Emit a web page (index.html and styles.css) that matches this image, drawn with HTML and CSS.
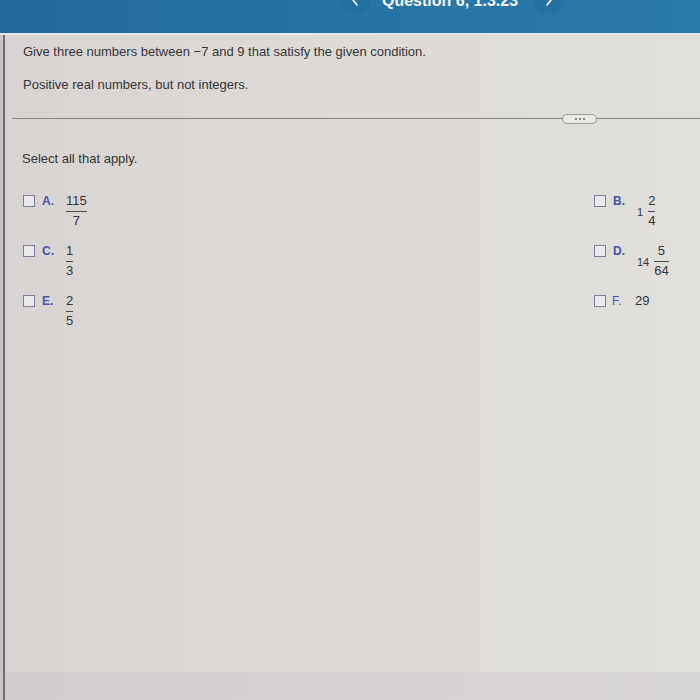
FILE: index.html
```html
<!DOCTYPE html>
<html lang="en">
<head>
<meta charset="utf-8">
<title>Question 6, 1.3.23</title>
<link rel="stylesheet" href="styles.css">
</head>
<body>
<div class="screen">
  <header class="topbar">
    <span class="navbtn">
      <svg width="10" height="12" viewBox="0 0 10 12"><path d="M7 1 L3 6 L7 11" fill="none" stroke="#ffffff" stroke-width="1.6" stroke-linecap="round" stroke-linejoin="round"/></svg>
    </span>
    <span class="title">Question 6, 1.3.23</span>
    <span class="navbtn navbtn-next">
      <svg width="10" height="12" viewBox="0 0 10 12"><path d="M3 1 L7 6 L3 11" fill="none" stroke="#ffffff" stroke-width="1.6" stroke-linecap="round" stroke-linejoin="round"/></svg>
    </span>
  </header>
  <div class="page">
    <main class="content">
      <p class="q">Give three numbers between &minus;7 and 9 that satisfy the given condition.</p>
      <p class="q q2">Positive real numbers, but not integers.</p>
      <div class="divider">
        <span class="rule rule-left"></span>
        <span class="pill"><i></i><i></i><i></i></span>
        <span class="rule rule-right"></span>
      </div>
      <p class="instr">Select all that apply.</p>
      <div class="options">
        <div class="opt">
          <span class="box"></span><span class="lbl">A.</span>
          <span class="frac"><span class="num">115</span><span class="den">7</span></span>
        </div>
        <div class="opt">
          <span class="box"></span><span class="lbl">B.</span>
          <span class="mixed"><span class="whole">1</span><span class="frac"><span class="num">2</span><span class="den">4</span></span></span>
        </div>
        <div class="opt">
          <span class="box"></span><span class="lbl">C.</span>
          <span class="frac"><span class="num">1</span><span class="den">3</span></span>
        </div>
        <div class="opt">
          <span class="box"></span><span class="lbl">D.</span>
          <span class="mixed mixed-d"><span class="whole">14</span><span class="frac"><span class="num">5</span><span class="den">64</span></span></span>
        </div>
        <div class="opt">
          <span class="box"></span><span class="lbl">E.</span>
          <span class="frac"><span class="num">2</span><span class="den">5</span></span>
        </div>
        <div class="opt">
          <span class="box"></span><span class="lbl lbl-f">F.</span>
          <span class="plain">29</span>
        </div>
      </div>
    </main>
    <footer class="footer"></footer>
  </div>
</div>
</body>
</html>
```

FILE: styles.css
```css
html, body {
  margin: 0;
  padding: 0;
}

body {
  width: 700px;
  height: 700px;
  overflow: hidden;
  font-family: "Liberation Sans", Arial, sans-serif;
  color: #3c3c3c;
}

.screen {
  height: 700px;
  display: flex;
  flex-direction: column;
  background: #cbc7c8;
}

.topbar {
  flex: 0 0 auto;
  height: 33px;
  border-bottom: 2px solid #e7e4e1;
  background: linear-gradient(90deg, #216a98 0%, #2674a4 45%, #2a7aab 100%);
  overflow: hidden;
  display: flex;
  align-items: flex-start;
  padding-left: 340px;
}

.navbtn {
  width: 30px;
  height: 30px;
  margin-top: -15px;
  border-radius: 50%;
  background: rgba(10, 40, 70, 0.07);
  display: flex;
  align-items: center;
  justify-content: center;
}

.navbtn-next {
  margin-left: 16px;
}

.title {
  margin-left: 12px;
  margin-top: -7px;
  font-size: 16px;
  line-height: 16px;
  font-weight: bold;
  color: #f4f7fa;
  white-space: nowrap;
}

.page {
  flex: 1;
  display: flex;
  flex-direction: column;
  margin-left: 3px;
  border-left: 2px solid #6e6c6d;
  background: linear-gradient(90deg, #d8d4d3 0%, #dcd9d6 40%, #dfddd9 75%, #e0dfdb 100%);
}

.content {
  flex: 1;
  padding: 9px 0 0 18px;
}

.q {
  margin: 0;
  font-size: 13px;
  line-height: 16px;
  color: #363636;
  white-space: nowrap;
}

.q2 {
  margin-top: 17px;
}

.divider {
  margin: 20px 0 0 -11px;
  height: 11px;
  display: flex;
  align-items: center;
}

.rule {
  height: 1px;
  background: #858382;
}

.rule-left {
  width: 550px;
}

.rule-right {
  flex: 1;
}

.pill {
  width: 33px;
  height: 8px;
  border: 1.5px solid #9a9898;
  border-radius: 6px;
  background: #ebe9e7;
  display: flex;
  align-items: center;
  justify-content: center;
  gap: 2px;
}

.pill i {
  width: 2px;
  height: 2px;
  background: #6f6f6f;
  border-radius: 1px;
}

.instr {
  margin: 27px 0 0 -1px;
  font-size: 13px;
  line-height: 16px;
  color: #363636;
}

.options {
  margin-top: 27px;
  display: grid;
  grid-template-columns: 571px auto;
  row-gap: 16px;
}

.opt {
  display: flex;
  align-items: flex-start;
}

.box {
  width: 10px;
  height: 10px;
  margin-top: 1px;
  border: 1px solid #7a7d9f;
  background: #ebeaea;
  flex: 0 0 auto;
}

.lbl {
  width: 22px;
  margin-left: 7px;
  font-size: 12px;
  line-height: 14px;
  font-weight: bold;
  color: #4a55a6;
}

.lbl-f {
  font-weight: normal;
  margin-left: 6px;
  width: 23px;
}

.frac {
  display: inline-flex;
  flex-direction: column;
  align-items: stretch;
  text-align: center;
  padding: 0 2px;
  font-size: 13px;
  color: #363636;
}

.num {
  line-height: 14px;
  padding-bottom: 3px;
  border-bottom: 1px solid #4a4a4a;
}

.den {
  line-height: 14px;
  padding-top: 2px;
}

.mixed {
  display: inline-flex;
  align-items: center;
  margin-left: 2px;
}

.mixed-d {
  margin-left: 2px;
}

.whole {
  font-size: 11px;
  line-height: 12px;
  margin-right: 3px;
  margin-top: 2px;
  color: #363636;
}

.plain {
  font-size: 13px;
  line-height: 14px;
  color: #363636;
}

.footer {
  flex: 0 0 28px;
  background: linear-gradient(90deg, #d2cecf, #d8d6d4);
}
```
